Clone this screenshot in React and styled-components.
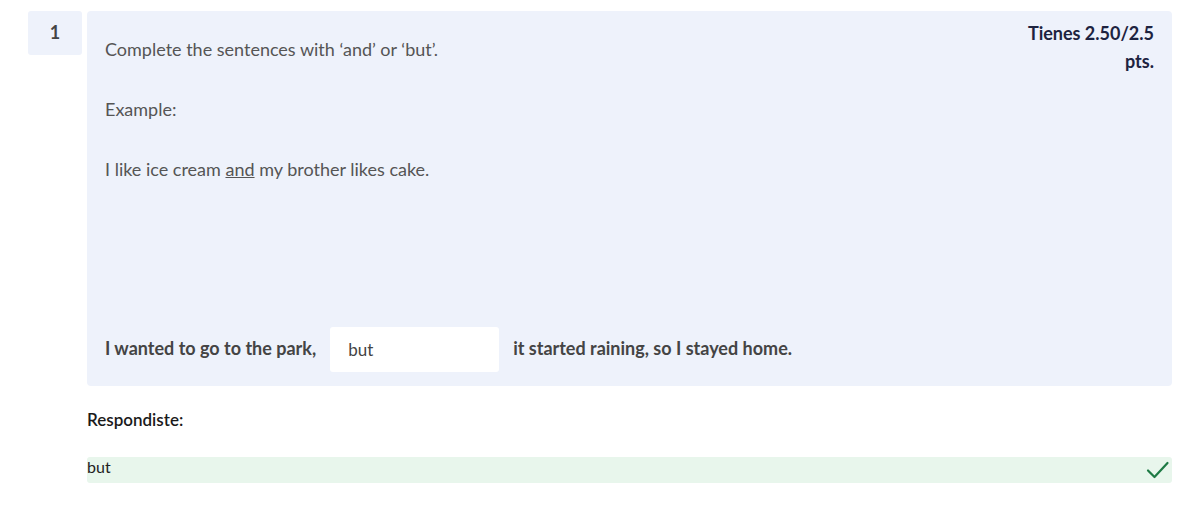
import React from 'react';
import styled, { createGlobalStyle } from 'styled-components';

const GlobalStyle = createGlobalStyle`
  body {
    margin: 0;
    background: #fff;
    font-family: Lato, "Liberation Sans", sans-serif;
  }
`;

const Page = styled.div`
  padding: 11px 28px 0 28px;
  width: 1144px;
`;

const QuestionRow = styled.div`
  display: flex;
  gap: 5px;
  align-items: flex-start;
`;

const NumberBox = styled.div`
  width: 54px;
  height: 44px;
  background: #eef2fb;
  border-radius: 3px;
  display: flex;
  justify-content: center;
  padding-top: 10px;
  box-sizing: border-box;
  font-size: 18px;
  line-height: 22px;
  font-weight: 700;
  color: #444;
`;

const Main = styled.div`
  flex: 1;
`;

const Card = styled.div`
  background: #eef2fb;
  border-radius: 4px;
  display: flex;
  padding: 8px 18px 14px 18px;
`;

const Content = styled.div`
  flex: 1;
  padding-top: 16px;
`;

const Score = styled.div`
  width: 140px;
  text-align: right;
  font-size: 18px;
  font-weight: 700;
  line-height: 28px;
  color: #1d2340;
`;

const Text = styled.p`
  margin: 0 0 ${(p) => p.$gap ?? 32}px 0;
  font-size: 18px;
  line-height: 28px;
  color: #555;
`;

const Gap = styled.div`
  height: ${(p) => p.$h}px;
`;

const Fill = styled.div`
  display: flex;
  align-items: center;
  gap: 14px;
  font-size: 18px;
  font-weight: 700;
  color: #444;

  & > span {
    padding-bottom: 4px;
  }
`;

const Blank = styled.input`
  width: 169px;
  height: 45px;
  box-sizing: border-box;
  border: none;
  border-radius: 3px;
  background: #fff;
  padding: 0 18px;
  font-family: inherit;
  font-size: 17px;
  color: #444;
  outline: none;
`;

const Label = styled.div`
  margin-top: 23px;
  font-size: 17px;
  font-weight: 600;
  color: #1a1a1a;
  line-height: 22px;
`;

const Answer = styled.div`
  margin-top: 26px;
  height: 26px;
  background: #e8f6ec;
  border-radius: 3px;
  display: flex;
  align-items: center;
  justify-content: space-between;
  padding-right: 2px;
  font-size: 16px;
  line-height: 20px;
  color: #222;

  & > span {
    padding-bottom: 7px;
  }
`;

const Check = () => (
  <svg width="25" height="22" viewBox="0 0 25 22" fill="none" stroke="#1e7a45" strokeWidth="2.2" strokeLinecap="round" strokeLinejoin="round">
    <path d="M3 11.5l6.5 6.5L22.5 4" />
  </svg>
);

export default function App() {
  return (
    <>
      <GlobalStyle />
      <Page>
        <QuestionRow>
          <NumberBox>1</NumberBox>
          <Main>
            <Card>
              <Content>
                <Text>Complete the sentences with ‘and’ or ‘but’.</Text>
                <Text>Example:</Text>
                <Text $gap={0}>I like ice cream <u>and</u> my brother likes cake.</Text>
                <Gap $h={144} />
                <Fill>
                  <span>I wanted to go to the park,</span>
                  <Blank defaultValue="but" readOnly />
                  <span>it started raining, so I stayed home.</span>
                </Fill>
              </Content>
              <Score>Tienes 2.50/2.5 pts.</Score>
            </Card>
            <Label>Respondiste:</Label>
            <Answer>
              <span>but</span>
              <Check />
            </Answer>
          </Main>
        </QuestionRow>
      </Page>
    </>
  );
}
